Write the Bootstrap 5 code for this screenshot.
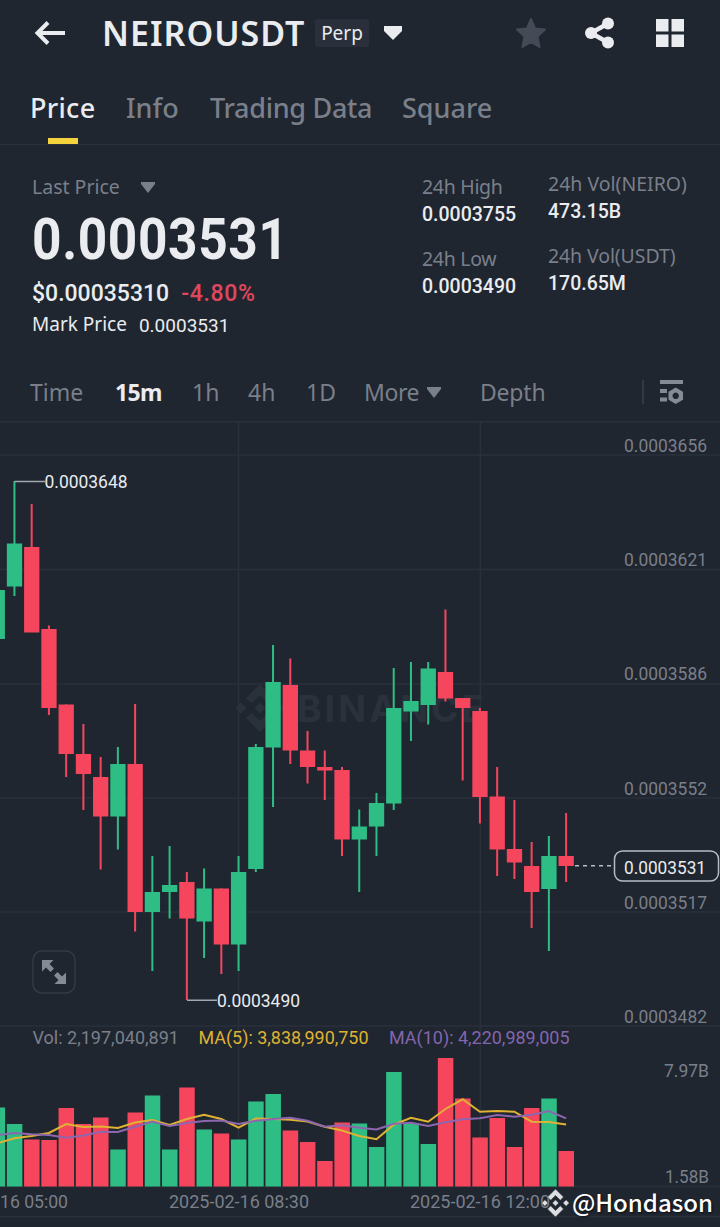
<!DOCTYPE html>
<html lang="en">
<head>
<meta charset="utf-8">
<meta name="viewport" content="width=device-width, initial-scale=1">
<title>NEIROUSDT Perp</title>
<link rel="stylesheet" href="https://cdn.jsdelivr.net/npm/bootstrap@5.3.0/dist/css/bootstrap.min.css">
<style>
  :root { --bg:#1f2630; --fg:#eaecef; --dim:#7a7f8a; --line:#2b313b; --up:#2ebd85; --down:#f6465d; --gold:#f5d33c; }
  body { background:var(--bg); color:var(--fg); font-family:"Noto Sans",sans-serif; line-height:1; overflow:hidden; }
  svg { display:block; flex:none; }
  .num { font-family:Roboto,"Liberation Sans",sans-serif; }
  .dim { color:var(--dim); }
  .topbar { height:66px; padding-left:34px; }
  .pair { font-size:34px; font-weight:600; margin-left:37px; width:213px; white-space:nowrap; letter-spacing:1px; }
  .perp { width:54px; height:28px; background:#2a303b; font-size:19px; border-radius:3px; }
  .tabs { height:79px; padding-left:30px; grid-template-columns:96px 84px 192px 100px; border-bottom:1px solid var(--line); font-size:27px; font-weight:500; }
  .tabs a, .frames a { color:var(--dim); text-decoration:none; white-space:nowrap; }
  .tabs a { padding-top:28px; }
  .tabs .wide { letter-spacing:-.3px; }
  .tabs .active { color:var(--fg); letter-spacing:.3px; }
  .tabs .active::after { content:""; display:block; width:30px; height:6px; margin:17px 0 0 18px; background:var(--gold); }
  .summary { height:218px; padding:31px 0 0 32px; font-size:19.5px; white-space:nowrap; }
  .left { width:390px; }
  .tag-row { height:22px; }
  .big { height:64px; margin-top:10px; line-height:64px; font-size:57px; font-weight:700; transform:scaleX(.902); transform-origin:0 50%; letter-spacing:.7px; }
  .usd { height:32px; margin-top:5px; font-size:23px; font-weight:500; }
  .mark-row { height:30px; font-size:19px; padding-top:1px; }
  .mark-row .num { padding-top:1px; }
  .stat { height:72px; }
  .stat .num { font-size:19.5px; font-weight:500; margin-top:8px; }
  .col-a { width:126px; padding-top:1px; }
  .col-b { margin-top:-2px; }
  .frames { height:58px; padding-left:30px; grid-template-columns:85px 77px 56px 58px 58px 116px 162px 17px auto; font-size:23px; }
  .frames .active { color:var(--fg); font-weight:700; letter-spacing:-.6px; }
  .vr-line { width:1.5px; height:24px; background:#333943; }
</style>
</head>
<body>
<header class="topbar d-flex align-items-center">
  <svg width="31" height="24" viewBox="0 0 31 24" fill="none" stroke="#eaecef" stroke-width="4"><path d="M31 12H3M14 1.5 3.5 12 14 22.5"/></svg>
  <div class="pair">NEIROUSDT</div>
  <span class="perp d-flex align-items-center justify-content-center">Perp</span>
  <svg style="margin-left:15px" width="18" height="14" viewBox="0 0 18 14" fill="#eaecef"><path d="M0 0h18v5L9 14 0 5z"/></svg>
  <svg style="margin-left:113px" width="32" height="32" viewBox="0 0 32 32" fill="#444a56" stroke="#444a56" stroke-width="2" stroke-linejoin="round"><path d="m16 2 4 9.500 10 1-7.500 7 2 10.500-8.500-5L7.500 30l2-10.500-7.500-7 10-1z"/></svg>
  <svg style="margin-left:38px" width="30" height="32" viewBox="0 0 30 32" fill="#eaecef"><circle cx="6" cy="16" r="6"/><circle cx="23" cy="6.500" r="6"/><circle cx="23" cy="25.500" r="6"/><path d="M23 6.500 6 16l17 9.500" fill="none" stroke="#eaecef" stroke-width="4.500"/></svg>
  <svg style="margin-left:41px" width="28" height="28" viewBox="0 0 28 28" fill="#eaecef"><path d="M0 0h12.500v12.500H0zM15.500 0H28v12.500H15.500zM0 15.500h12.500V28H0zM15.500 15.500H28V28H15.500z"/></svg>
</header>

<nav class="tabs d-grid">
  <a class="active" href="#">Price</a><a href="#">Info</a><a class="wide" href="#">Trading Data</a><a href="#">Square</a>
</nav>

<section class="summary d-flex">
  <div class="left">
    <div class="tag-row d-flex align-items-center dim">Last Price
      <svg style="margin-left:21px" width="14" height="11" viewBox="0 0 14 11" fill="#7a7f8a"><path d="M0 0h14v2L7 11 0 2z"/></svg></div>
    <div class="big num">0.0003531</div>
    <div class="usd num d-flex align-items-center"><span>$0.00035310</span><span style="color:#e0465d;margin-left:12px;letter-spacing:.7px">-4.80%</span></div>
    <div class="mark-row d-flex align-items-center"><span>Mark Price</span><span class="num" style="margin-left:12px">0.0003531</span></div>
  </div>
  <div class="col-a">
    <div class="stat"><div class="dim" style="letter-spacing:-.3px">24h High</div><div class="num">0.0003755</div></div>
    <div class="stat"><div class="dim" style="letter-spacing:-.3px">24h Low</div><div class="num">0.0003490</div></div>
  </div>
  <div class="col-b">
    <div class="stat"><div class="dim">24h Vol(NEIRO)</div><div class="num">473.15B</div></div>
    <div class="stat"><div class="dim" style="letter-spacing:-.1px">24h Vol(USDT)</div><div class="num">170.65M</div></div>
  </div>
</section>

<nav class="frames d-grid align-items-center">
  <a href="#">Time</a><a class="active" href="#">15m</a><a href="#">1h</a><a href="#">4h</a><a href="#">1D</a>
  <a class="d-flex align-items-center" href="#"><span style="letter-spacing:-.4px">More</span><svg class="ms-2" width="14" height="11" viewBox="0 0 14 11" fill="#7a7f8a"><path d="M0 0h14v2L7 11 0 2z"/></svg></a>
  <a href="#" style="letter-spacing:-.2px">Depth</a>
  <span class="vr-line"></span>
  <svg width="25" height="26" viewBox="0 0 25 26" fill="#858a95"><path d="M1 1h23v4H1zM1 10h7v4H1zM1 18.500h7v4H1z"/><path fill-rule="evenodd" d="m16.700 8.500 7.300 4.200v8.100L16.700 25l-7.200-4.200v-8.100zM16.700 13.600a3.200 3.200 0 1 0 .01 0z"/></svg>
</nav>

<main>
  <svg id="chart" width="720" height="806" viewBox="0 421 720 806" font-family="Roboto, sans-serif" font-size="18.500">
    <g id="grid" stroke="#2b313b" stroke-width="1.500"></g>
    <g fill="#2b313b">
      <g transform="translate(260 708)"><path d="M0-24 14-10 8.500-4.500 0-13-8.500-4.500-14-10zM0 24 14 10 8.500 4.500 0 13-8.500 4.500-14 10zM0-5.500 5.500 0 0 5.500-5.500 0zM-19-5.500-13.500 0-19 5.500-24.500 0zM19-5.500 24.500 0 19 5.500 13.500 0z"/></g>
      <text x="297" y="721.5" font-family="Inter, sans-serif" font-size="37" font-weight="700" textLength="187" lengthAdjust="spacing">BINANCE</text>
    </g>
    <g id="candles"></g>
    <g id="volume"></g>
    <path d="M14.600 481.500H45M187 1000.300H217" stroke="#a2a7b0" stroke-width="1.500"/>
    <path d="M575 865.700H614" stroke="#b7bbc2" stroke-width="1.500" stroke-dasharray="4 4"/>
    <rect x="614.500" y="851" width="104" height="30" rx="8" fill="#1f2630" stroke="#b7bbc2" stroke-width="1.500"/>
    <rect x="33" y="951" width="42" height="42" rx="9" fill="none" stroke="#343943" stroke-width="1.500"/>
    <path d="M42 960h11.500l-4 4 4.500 4.500-3.500 3.500-4.500-4.500-4 4zM66 984H54.500l4-4-4.500-4.500 3.500-3.500 4.500 4.500 4-4z" fill="#858a95"/>
    <g id="labels"></g>
    <path d="M0 1216.500H720" stroke="#2b313b" stroke-width="1.500"/>
    <g transform="translate(555.500 1203)" fill="#dcdee1" stroke="#1f2630" stroke-width=".5"><path d="M0-14 8-6 4.800-2.800 0-7.500-4.800-2.800-8-6zM0 14 8 6 4.800 2.800 0 7.500-4.800 2.800-8 6zM0-3.200 3.200 0 0 3.200-3.200 0zM-10.600-3.200-7.400 0-10.600 3.200-13.800 0zM10.600-3.200 13.800 0 10.600 3.200 7.400 0z"/></g>
    <text x="572" y="1212" fill="#fff" font-family="'Noto Sans CJK SC', sans-serif" font-size="23.500" font-weight="500" textLength="141" lengthAdjust="spacingAndGlyphs" style="text-shadow:1px 1px 2px #000a">@Hondason</text>
  </svg>
</main>

<script src="https://cdn.jsdelivr.net/npm/bootstrap@5.3.0/dist/js/bootstrap.bundle.min.js"></script>
<script>
  // direction, body top, body bottom, wick top, wick bottom, volume top
  const bars = [
    ['g',590,639,590,639,1107.5],['g',543.5,586.5,481,596,1124],['r',547,632.5,504,632,1139.5],['r',629,708,625.5,715,1140],
    ['r',704.5,754,704.5,777,1108],['r',754,774,724,810,1124],['r',777,816.5,757,869.500,1117.5],['g',764,816.5,747,849.5,1149.5],
    ['r',764,912,704,931.5,1112.5],['g',892,912,856,971,1095.5],['g',885,892,846,918.5,1149.5],['r',882,918.5,872,1000,1087.5],
    ['g',888.5,921.5,868.5,958,1129.5],['r',888.5,944.5,888.5,974,1133.5],['g',872,944.5,856,971,1139.5],['g',747,869,744,872,1101.5],
    ['g',682,747.5,645,807,1094],['r',685,750.5,658.5,764,1130.5],['r',750.5,767,731,783.5,1142],['r',767,770.5,750.5,800,1161],
    ['r',770,839.5,767,856,1122.5],['g',826.5,839.5,809.5,892,1123.5],['g',803,826.5,793,856,1147],['g',708,803.5,668,810,1072],
    ['g',701,711.5,662,741,1123],['g',668.5,705,662,724.5,1144],['r',672,698.5,609.5,701.5,1058],['r',698,708,698,780.5,1098.5],
    ['r',711,797,708,823.5,1137.5],['r',796.5,849.5,767,876,1118],['r',849,862.5,800,879,1147],['r',866,892,842,928,1108],
    ['g',856,889,836,951,1098.5],['r',856,866,813,882,1151]
  ];
  const ma5 = [1143.3,1138.3,1136,1133,1124,1127,1126.5,1128,1122.5,1120,1125,1119,1114.7,1119,1127.7,1118.5,1119,1119.7,1121.5,1126.7,1130.5,1136,1139.3,1124.7,1117.7,1121.7,1109,1099.3,1111.7,1111,1111.7,1121.7,1122,1124.5];
  const ma10 = [1135,1133,1134.3,1135,1137.7,1135.5,1131.7,1132,1126.7,1121.5,1126,1123,1121,1120.5,1124,1120.7,1119,1117.7,1120.7,1126.7,1125.3,1127.7,1129.5,1123.7,1122.7,1126,1122.3,1119.3,1118.3,1115,1116.7,1114.7,1111,1118.3];
  const cx = i => -2.8 + i * 17.24;
  const color = { g:'#2ebd85', r:'#f6465d' };
  const put = (id, html) => document.getElementById(id).innerHTML = html;

  put('grid', [421.8,455,569.5,684,798,912,1026,1186.5].map(y => `<path d="M0 ${y}H720"/>`).join('')
    + [238.5,480.3].map(x => `<path d="M${x} 421V1186"/>`).join(''));
  put('candles', bars.map(([d,t,b,wt,wb],i) =>
    `<g fill="${color[d]}"><rect x="${cx(i)-1}" y="${wt}" width="2" height="${wb-wt}"/><rect x="${cx(i)-7.6}" y="${t}" width="15.300" height="${b-t}"/></g>`).join(''));
  const line = (a, c) => `<polyline fill="none" stroke="${c}" stroke-width="2" points="${a.map((y,i) => cx(i)+','+y).join(' ')}"/>`;
  put('volume', bars.map((r,i) => `<rect x="${cx(i)-7.6}" y="${r[5]}" width="15.500" height="${1186.5-r[5]}" fill="${color[r[0]]}"/>`).join('')
    + line(ma5, '#dfb232') + line(ma10, '#8d66b0'));

  const G = '#7a7f8a', W = '#eaecef';
  put('labels', [
    [624,451.500,83,'0.0003656',G],[624,565.5,83,'0.0003621',G],[624,679.500,83,'0.0003586',G],[624,794.500,83,'0.0003552',G],
    [624,908.500,83,'0.0003517',G],[624,1022.500,83,'0.0003482',G],[624,874,82,'0.0003531',W],
    [44.5,488.2,83,'0.0003648',W],[217,1007,83,'0.0003490',W],
    [32.500,1044,146.500,'Vol: 2,197,040,891',G],[198.5,1044,170,'MA(5): 3,838,990,750','#dfb232'],[389,1044,180.500,'MA(10): 4,220,989,005','#8465ad'],
    [664,1076.500,45,'7.97B',G],[665,1182.500,44,'1.58B',G],
    [0,1208,68,'16 05:00',G],[169,1208,140,'2025-02-16 08:30',G],[410,1208,140,'2025-02-16 12:00',G]
  ].map(([x,y,w,t,c]) => `<text x="${x}" y="${y}" fill="${c}" textLength="${w}" lengthAdjust="spacingAndGlyphs">${t}</text>`).join(''));
</script>
</body>
</html>
